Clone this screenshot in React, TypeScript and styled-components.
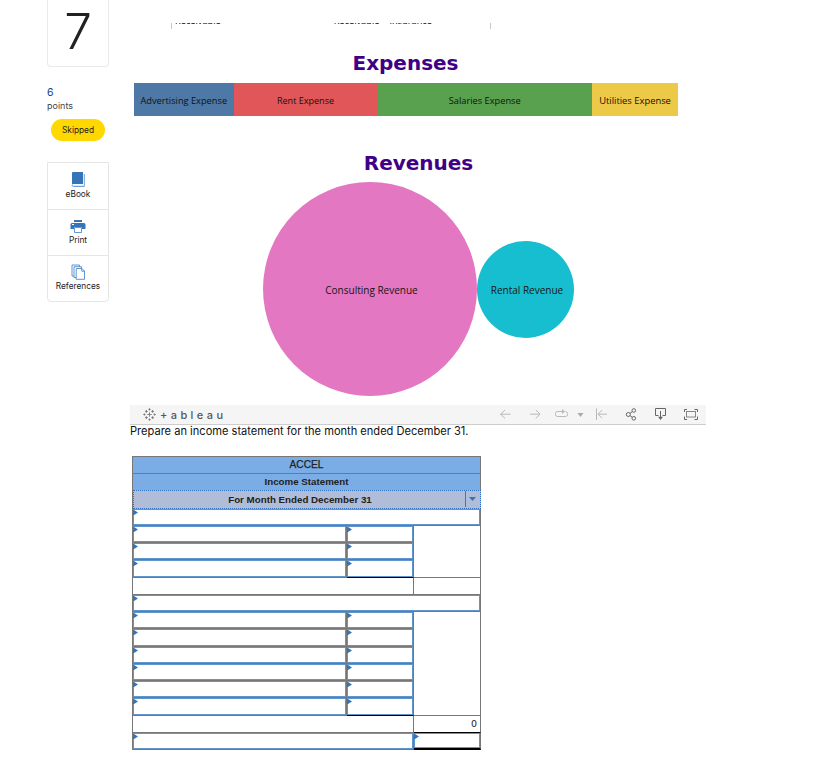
import React from 'react';
import styled, { createGlobalStyle, css } from 'styled-components';

const GlobalStyle = createGlobalStyle`
  *, *::before, *::after { box-sizing: border-box; }
  body { margin: 0; background: #fff; color: #212121; font-family: "Open Sans", "Noto Sans", sans-serif; overflow: hidden; }
`;

const Page = styled.div`
  display: flex;
  gap: 21px;
  width: 835px;
  height: 782px;
  padding-left: 47px;
  overflow: hidden;
`;

const Sidebar = styled.aside`
  flex: none;
  width: 62px;
  font-family: Inter, sans-serif;
`;

const QuestionNumber = styled.div`
  height: 67px;
  border: 1px solid #e9e9e9;
  border-top: 0;
  border-radius: 0 0 4px 4px;
  font: 300 49.5px/62px Inter, sans-serif;
  text-align: center;
  color: #222;
`;

const Points = styled.div`
  margin-top: 19px;
  font-size: 9px;
  line-height: 12px;
  color: #444;
`;

const PointsValue = styled.div`
  font-size: 10.5px;
  line-height: 14px;
  color: #10417f;
`;

const Badge = styled.div`
  width: 54px;
  height: 22px;
  margin: 7px 0 0 4px;
  border-radius: 11px;
  background: #ffd800;
  font-size: 8.3px;
  font-weight: 400;
  line-height: 22px;
  text-align: center;
`;

const Tools = styled.nav`
  margin-top: 21px;
  height: 140px;
  display: grid;
  grid-template-rows: 46px 46px 46px;
  border: 1px solid #e6e6e6;
  border-radius: 0 0 4px 4px;
`;

const Tool = styled.button`
  display: flex;
  flex-direction: column;
  align-items: center;
  padding: 8px 0 0;
  border: 0;
  background: none;
  font: 400 8.3px/12px Inter, sans-serif;
  color: #222;
  & + & { border-top: 1px solid #e6e6e6; }
  svg { flex: none; display: block; }
`;

const Main = styled.main`
  flex: none;
  width: 576px;
`;

const AxisStrip = styled.div`
  display: flex;
  justify-content: space-between;
  width: 320px;
  height: 6px;
  margin: 23px 0 0 41px;
  border: solid #c8c8c8;
  border-width: 0 1px;
`;

const AxisLabel = styled.div`
  display: flex;
  align-items: flex-end;
  gap: 10px;
  height: 1px;
  margin: 0 3px;
  overflow: hidden;
  font: 400 9.25px/7px "Open Sans", sans-serif;
  color: #000;
  &:last-child { margin-right: 58px; }
`;

const Heading = styled.h2<{ $center: number; $top: number }>`
  width: ${p => p.$center * 2}px;
  margin: ${p => p.$top}px 0 0;
  font: 700 20px/24px "DejaVu Sans", Verdana, sans-serif;
  text-align: center;
  color: #3f0085;
`;

const ExpenseBar = styled.div`
  display: grid;
  grid-template-columns: 99.5px 144px 214.5px 86px;
  grid-template-rows: 33px;
  width: 544px;
  height: 33px;
  margin: 8px 0 0 4px;
`;

const Expense = styled.div<{ $color: string; $size?: number }>`
  height: 33px;
  background: ${p => p.$color};
  font-size: ${p => p.$size ?? 9.25}px;
  line-height: 35px;
  text-align: center;
  white-space: nowrap;
  color: #111;
`;

const Bubbles = styled.div`
  display: flex;
  align-items: center;
  margin: 7px 0 0 133px;
  height: 214px;
`;

const Bubble = styled.div<{ $size: number; $color: string }>`
  flex: none;
  width: ${p => p.$size}px;
  height: ${p => p.$size}px;
  border-radius: 50%;
  background: ${p => p.$color};
  font-size: 10px;
  line-height: ${p => p.$size + 2}px;
  padding-left: 3px;
  text-align: center;
  white-space: nowrap;
  color: #161616;
`;

const Toolbar = styled.div`
  display: flex;
  align-items: center;
  height: 20px;
  margin-top: 9px;
  padding-left: 13px;
  background: #f5f5f5;
  border-bottom: 1px solid #cdcdcd;
`;

const Brand = styled.div`
  display: flex;
  align-items: center;
  gap: 4px;
  width: 352px;
  font: 500 11px/18px Inter, sans-serif;
  letter-spacing: 3.4px;
  color: #555;
`;

const Controls = styled.svg`
  flex: none;
  width: 210px;
  height: 19px;
`;

const Prompt = styled.p`
  margin: -1px 0 0;
  height: 15px;
  font: 400 11.09px/15px Inter, sans-serif;
  white-space: nowrap;
  color: #111;
`;

const Statement = styled.div`
  display: grid;
  grid-template-columns: 214px 67px 67px;
  grid-template-rows: 17px 17px 18px 17px 17px 17px 18px 17px 17px 17px 18px 17px 17px 17px 18px 17px 17px;
  width: 349px;
  margin: 17px 0 0 2px;
  border: solid #777;
  border-width: 1px 0 0 1px;
`;

const Cell = styled.div<{ $span?: number; $rows?: number; $total?: boolean; $double?: boolean }>`
  grid-column: span ${p => p.$span ?? 1};
  grid-row: span ${p => p.$rows ?? 1};
  border: solid #777;
  border-width: 0 1px 1px 0;
  font: 9.5px/15px "DejaVu Sans", sans-serif;
  text-align: right;
  padding-right: 3px;
  ${p => p.$total && css`border-bottom-color: #000;`}
  ${p => p.$double && css`border-bottom: 2px solid #000;`}
`;

const TitleCell = styled.div`
  grid-column: 1 / -1;
  border: solid #777;
  border-width: 0 1px 1px 0;
  background: #7aade6;
  font: 700 9.75px/16px "Liberation Sans", Arial, sans-serif;
  text-align: center;
`;

const CompanyName = styled.span`
  font-weight: 400;
  font-size: 10.2px;
  -webkit-text-stroke: 0.25px #212121;
`;

const SelectedCell = styled.div`
  grid-column: 1 / -1;
  display: flex;
  margin-top: -1px;
  border: 1px dotted #2f6fbb;
  background: #b0bdd9;
  font: 700 9.75px/18px "Liberation Sans", Arial, sans-serif;
  text-align: center;
`;

const SelectedText = styled.div`
  flex: 1;
  padding-left: 1px;
`;

const Dropdown = styled.button`
  display: flex;
  align-items: center;
  justify-content: center;
  width: 15px;
  height: 16px;
  padding: 0 1px 0 0;
  border: 0;
  border-left: 1px solid #3b78bd;
  background: none;
`;

const InputFrame = styled.div`
  height: 100%;
  border: 1px solid #6095ce;
  svg { display: block; margin-left: -1px; }
`;

const EntryCell = styled(Cell)`
  padding: 0;
  height: 100%;
`;

function Entry(props: { span?: number; total?: boolean; double?: boolean }) {
  return (
    <EntryCell $span={props.span} $total={props.total} $double={props.double}>
      <InputFrame>
        <svg width="5" height="5" viewBox="0 0 5 5"><path d="M0 0H1L5 2.5 1 5H0Z" fill="#3674b9" /></svg>
      </InputFrame>
    </EntryCell>
  );
}

function EntryGroup({ count }: { count: number }) {
  return (
    <>
      {Array.from({ length: count }, (_, i) => (
        <React.Fragment key={i}>
          <Entry />
          <Entry total={i === count - 1} />
          {i === 0 && <Cell $rows={count} />}
        </React.Fragment>
      ))}
    </>
  );
}

const BookIcon = () => (
  <svg width="14" height="17" viewBox="0 0 14 17">
    <path d="M2 1H12V13H2.3Q1 13 1 14.2V2Q1 1 2 1Z" fill="#3674b9" />
    <path d="M1 14Q1 15.5 2.7 15.5H13.3V3" fill="none" stroke="#6fa0d8" />
    <path d="M2 14.3H12.5" stroke="#d5e4f4" />
  </svg>
);

const PrintIcon = () => (
  <svg width="16" height="16" viewBox="0 0 16 16">
    <path d="M4 2H12V4H4Z" fill="#3674b9" />
    <path d="M2 5H14Q15.5 5 15.5 6.5V11H12V9H4V11H.5V6.5Q.5 5 2 5Z" fill="#3674b9" />
    <path d="M4.5 9.5H11.5V14.5H4.5Z" fill="#fff" stroke="#6497d1" />
    <path d="M2 6.5H4" stroke="#fff" />
  </svg>
);

const ReferencesIcon = () => (
  <svg width="15" height="16" viewBox="0 0 15 16" fill="#fff" stroke="#4f8ac8" strokeWidth=".9">
    <path d="M1 1H8.5V12H1Z" />
    <path d="M3 2.7H10.5V13.5H3Z" />
    <path d="M5.2 4.5H11L13.5 7V15.3H5.2Z" />
    <path d="M10.8 4.5V7.2H13.5" fill="none" />
  </svg>
);

const TableauMark = () => (
  <svg width="13" height="13" viewBox="0 0 13 13" stroke="#777" strokeWidth=".9">
    <path d="M6.5 4.3V8.7M4.3 6.5H8.7M6.5 .3V2.5M5.4 1.4H7.6M6.5 10.5V12.7M5.4 11.6H7.6M.3 6.5H2.5M1.4 5.4V7.6M10.5 6.5H12.7M11.6 5.4V7.6M3.4 2V4.8M2 3.4H4.8M9.6 2V4.8M8.2 3.4H11M3.4 8.2V11M2 9.6H4.8M9.6 8.2V11M8.2 9.6H11" />
  </svg>
);

const ToolbarControls = () => (
  <Controls viewBox="495 405 210 19" fill="none" stroke="#b9b9b9">
    <path d="M510.5 414.2H500.5M505 410L500.5 414.2L505 418.4M530 414.2H540M535.8 410L540 414.2L535.8 418.4" />
    <path d="M562 411.5H557.5Q555.5 411.5 555.5 413.5V414.5Q555.5 416.5 557.5 416.5H565.5Q567.5 416.5 567.5 414.5V413.5Q567.5 411.8 565.5 411.5" />
    <path d="M562 409V414L565 411.5Z" fill="#b9b9b9" stroke="none" />
    <path d="M577.5 413H583.5L580.5 417Z" fill="#aaa" stroke="none" />
    <path d="M596.5 408.5V420M607 414.2H598M602 410.2L598 414.2L602 418.2" />
    <g stroke="#666">
      <circle cx="628.3" cy="414.5" r="2" />
      <circle cx="633.8" cy="410.5" r="1.8" />
      <circle cx="633.8" cy="418.3" r="1.8" />
      <path d="M630 413.3L632.2 411.7M630 415.7L632.2 417.2" />
      <path d="M658.5 415.5H655.5V408.5H665.5V415.5H662.5M660.5 411V419" />
      <path d="M658 416.8H663L660.5 420Z" fill="#666" stroke="none" />
      <path d="M687 409.5H684.5V412M694.5 409.5H697.5V412M684.5 416.5V419.5H687M697.5 416.5V419.5H694.5" />
      <rect x="686.5" y="411.5" width="9" height="5.5" stroke="#888" />
    </g>
  </Controls>
);

export default function App() {
  return (
    <Page>
      <GlobalStyle />
      <Sidebar>
        <QuestionNumber>7</QuestionNumber>
        <Points>
          <PointsValue>6</PointsValue>
          <div>points</div>
        </Points>
        <Badge>Skipped</Badge>
        <Tools>
          <Tool><BookIcon />eBook</Tool>
          <Tool><PrintIcon />Print</Tool>
          <Tool><ReferencesIcon />References</Tool>
        </Tools>
      </Sidebar>
      <Main>
        <AxisStrip>
          <AxisLabel>Receivable</AxisLabel>
          <AxisLabel><span>Receivable</span><span>Insurance</span></AxisLabel>
        </AxisStrip>
        <Heading $center={275.5} $top={22}>Expenses</Heading>
        <ExpenseBar>
          <Expense $color="#4e79a7">Advertising Expense</Expense>
          <Expense $color="#e15759" $size={9.05}>Rent Expense</Expense>
          <Expense $color="#59a14f">Salaries Expense</Expense>
          <Expense $color="#edc948" $size={9.4}>Utilities Expense</Expense>
        </ExpenseBar>
        <Heading $center={288.5} $top={35}>Revenues</Heading>
        <Bubbles>
          <Bubble $size={214} $color="#e377c2">Consulting Revenue</Bubble>
          <Bubble $size={97} $color="#17becf">Rental Revenue</Bubble>
        </Bubbles>
        <Toolbar>
          <Brand><TableauMark />+ableau</Brand>
          <ToolbarControls />
        </Toolbar>
        <Prompt>Prepare an income statement for the month ended December 31.</Prompt>
        <Statement>
          <TitleCell><CompanyName>ACCEL</CompanyName></TitleCell>
          <TitleCell>Income Statement</TitleCell>
          <SelectedCell>
            <SelectedText>For Month Ended December 31</SelectedText>
            <Dropdown aria-label="Choose heading">
              <svg width="7" height="4" viewBox="0 0 7 4"><path d="M0 0H7L3.5 4Z" fill="#3674b9" /></svg>
            </Dropdown>
          </SelectedCell>
          <Entry span={3} />
          <EntryGroup count={3} />
          <Cell $span={2} />
          <Cell />
          <Entry span={3} />
          <EntryGroup count={6} />
          <Cell $span={2} />
          <Cell $total>0</Cell>
          <Entry span={2} />
          <Entry double />
        </Statement>
      </Main>
    </Page>
  );
}
